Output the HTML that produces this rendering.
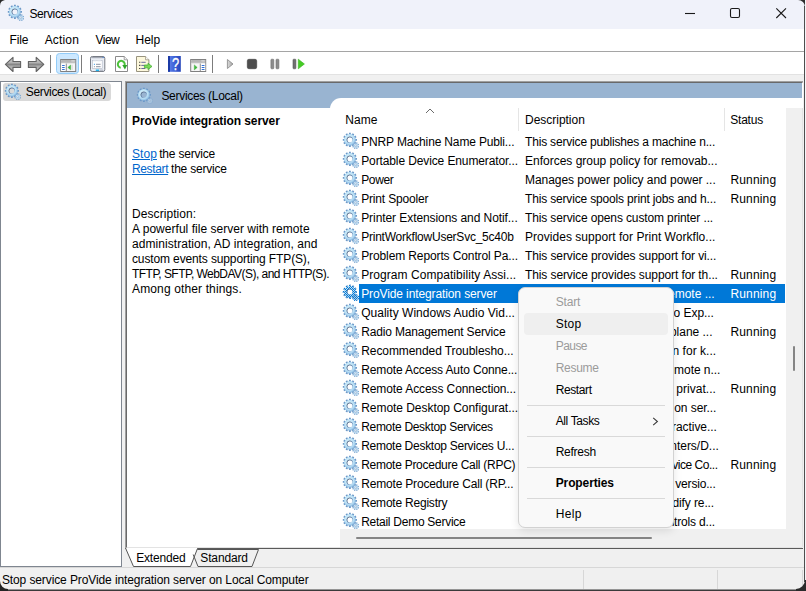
<!DOCTYPE html>
<html lang="en">
<head>
<meta charset="utf-8">
<title>Services</title>
<style>
*{box-sizing:border-box;margin:0;padding:0}
html,body{width:806px;height:591px;overflow:hidden;background:#f0f0f0}
body{font-family:"Liberation Sans",sans-serif;font-size:12px;color:#000;position:relative}
.a{position:absolute}
.t{position:absolute;white-space:nowrap;line-height:16px;height:16px}
svg{position:absolute;overflow:visible}
</style>
</head>
<body>
<svg width="0" height="0" style="left:0;top:0"><defs>
<radialGradient id="gg" cx="45%" cy="42%" r="58%"><stop offset="0" stop-color="#e2f5fc"/><stop offset="0.62" stop-color="#bfe4f7"/><stop offset="0.86" stop-color="#9bc8ea"/><stop offset="1" stop-color="#7ba6d1"/></radialGradient>
<radialGradient id="gs" cx="40%" cy="35%" r="75%"><stop offset="0" stop-color="#7fb0e8"/><stop offset="1" stop-color="#2c63c4"/></radialGradient>
<linearGradient id="ar" x1="0" y1="0" x2="0" y2="1"><stop offset="0" stop-color="#a9a9a9"/><stop offset="0.5" stop-color="#8c8c8c"/><stop offset="1" stop-color="#9d9d9d"/></linearGradient>
<linearGradient id="hb" x1="0" y1="0" x2="1" y2="0"><stop offset="0" stop-color="#6586ea"/><stop offset="0.5" stop-color="#3e62d8"/><stop offset="1" stop-color="#2546ba"/></linearGradient>
<pattern id="chk" width="2" height="2" patternUnits="userSpaceOnUse"><rect width="1" height="1" fill="#0078d7"/><rect x="1" y="1" width="1" height="1" fill="#0078d7"/></pattern>
<linearGradient id="hr" x1="0.15" y1="0.15" x2="0.85" y2="0.85"><stop offset="0" stop-color="#4a5a78"/><stop offset="0.55" stop-color="#6f8fb8"/><stop offset="1" stop-color="#b5d8f0"/></linearGradient>
<symbol id="gb" viewBox="0 0 17 17"><path d="M13.02 6.98 L14.99 6.97 L14.99 8.83 L13.02 8.82 L12.79 9.66 L14.51 10.64 L13.57 12.25 L11.87 11.26 L11.26 11.87 L12.25 13.57 L10.64 14.51 L9.66 12.79 L8.82 13.02 L8.83 14.99 L6.97 14.99 L6.98 13.02 L6.14 12.79 L5.16 14.51 L3.55 13.57 L4.54 11.87 L3.93 11.26 L2.23 12.25 L1.29 10.64 L3.01 9.66 L2.78 8.82 L0.81 8.83 L0.81 6.97 L2.78 6.98 L3.01 6.14 L1.29 5.16 L2.23 3.55 L3.93 4.54 L4.54 3.93 L3.55 2.23 L5.16 1.29 L6.14 3.01 L6.98 2.78 L6.97 0.81 L8.83 0.81 L8.82 2.78 L9.66 3.01 L10.64 1.29 L12.25 2.23 L11.26 3.93 L11.87 4.54 L13.57 3.55 L14.51 5.16 L12.79 6.14ZM5.00 7.90a2.9 2.9 0 1 0 5.8 0a2.9 2.9 0 1 0 -5.8 0Z" fill="#6c99c8" fill-rule="evenodd"/><path d="M2.00 7.90a5.9 5.9 0 1 0 11.8 0a5.9 5.9 0 1 0 -11.8 0ZM5.00 7.90a2.9 2.9 0 1 0 5.8 0a2.9 2.9 0 1 0 -5.8 0Z" fill="url(#gg)" fill-rule="evenodd"/><circle cx="7.9" cy="7.9" r="3.0" fill="none" stroke="url(#hr)" stroke-width="0.85"/><g opacity="0.45"><path d="M15.98 13.98 L17.23 14.38 L16.71 15.64 L15.54 15.05 L15.15 15.44 L15.74 16.61 L14.48 17.13 L14.08 15.88 L13.52 15.88 L13.12 17.13 L11.86 16.61 L12.45 15.44 L12.06 15.05 L10.89 15.64 L10.37 14.38 L11.62 13.98 L11.62 13.42 L10.37 13.02 L10.89 11.76 L12.06 12.35 L12.45 11.96 L11.86 10.79 L13.12 10.27 L13.52 11.52 L14.08 11.52 L14.48 10.27 L15.74 10.79 L15.15 11.96 L15.54 12.35 L16.71 11.76 L17.23 13.02 L15.98 13.42Z" fill="#7fa9d2"/><circle cx="13.8" cy="13.7" r="2.3" fill="#c0def3"/><circle cx="13.8" cy="13.7" r="0.9" fill="#fff" stroke="#7d9cc2" stroke-width="0.5"/></g></symbol>
<symbol id="g" viewBox="0 0 17 17"><path d="M13.02 6.98 L14.99 6.97 L14.99 8.83 L13.02 8.82 L12.79 9.66 L14.51 10.64 L13.57 12.25 L11.87 11.26 L11.26 11.87 L12.25 13.57 L10.64 14.51 L9.66 12.79 L8.82 13.02 L8.83 14.99 L6.97 14.99 L6.98 13.02 L6.14 12.79 L5.16 14.51 L3.55 13.57 L4.54 11.87 L3.93 11.26 L2.23 12.25 L1.29 10.64 L3.01 9.66 L2.78 8.82 L0.81 8.83 L0.81 6.97 L2.78 6.98 L3.01 6.14 L1.29 5.16 L2.23 3.55 L3.93 4.54 L4.54 3.93 L3.55 2.23 L5.16 1.29 L6.14 3.01 L6.98 2.78 L6.97 0.81 L8.83 0.81 L8.82 2.78 L9.66 3.01 L10.64 1.29 L12.25 2.23 L11.26 3.93 L11.87 4.54 L13.57 3.55 L14.51 5.16 L12.79 6.14ZM5.00 7.90a2.9 2.9 0 1 0 5.8 0a2.9 2.9 0 1 0 -5.8 0Z" fill="#6c99c8" fill-rule="evenodd"/><path d="M2.00 7.90a5.9 5.9 0 1 0 11.8 0a5.9 5.9 0 1 0 -11.8 0ZM5.00 7.90a2.9 2.9 0 1 0 5.8 0a2.9 2.9 0 1 0 -5.8 0Z" fill="url(#gg)" fill-rule="evenodd"/><circle cx="7.9" cy="7.9" r="3.0" fill="none" stroke="url(#hr)" stroke-width="0.85"/><path d="M15.98 13.98 L17.23 14.38 L16.71 15.64 L15.54 15.05 L15.15 15.44 L15.74 16.61 L14.48 17.13 L14.08 15.88 L13.52 15.88 L13.12 17.13 L11.86 16.61 L12.45 15.44 L12.06 15.05 L10.89 15.64 L10.37 14.38 L11.62 13.98 L11.62 13.42 L10.37 13.02 L10.89 11.76 L12.06 12.35 L12.45 11.96 L11.86 10.79 L13.12 10.27 L13.52 11.52 L14.08 11.52 L14.48 10.27 L15.74 10.79 L15.15 11.96 L15.54 12.35 L16.71 11.76 L17.23 13.02 L15.98 13.42Z" fill="#7fa9d2"/><circle cx="13.8" cy="13.7" r="2.3" fill="#c0def3"/><circle cx="13.8" cy="13.7" r="0.9" fill="#fff" stroke="#7d9cc2" stroke-width="0.5"/></symbol>
<symbol id="gsel" viewBox="0 0 17 17"><path d="M13.02 6.98 L14.99 6.97 L14.99 8.83 L13.02 8.82 L12.79 9.66 L14.51 10.64 L13.57 12.25 L11.87 11.26 L11.26 11.87 L12.25 13.57 L10.64 14.51 L9.66 12.79 L8.82 13.02 L8.83 14.99 L6.97 14.99 L6.98 13.02 L6.14 12.79 L5.16 14.51 L3.55 13.57 L4.54 11.87 L3.93 11.26 L2.23 12.25 L1.29 10.64 L3.01 9.66 L2.78 8.82 L0.81 8.83 L0.81 6.97 L2.78 6.98 L3.01 6.14 L1.29 5.16 L2.23 3.55 L3.93 4.54 L4.54 3.93 L3.55 2.23 L5.16 1.29 L6.14 3.01 L6.98 2.78 L6.97 0.81 L8.83 0.81 L8.82 2.78 L9.66 3.01 L10.64 1.29 L12.25 2.23 L11.26 3.93 L11.87 4.54 L13.57 3.55 L14.51 5.16 L12.79 6.14ZM5.00 7.90a2.9 2.9 0 1 0 5.8 0a2.9 2.9 0 1 0 -5.8 0Z" fill="#6c99c8" fill-rule="evenodd"/><path d="M2.00 7.90a5.9 5.9 0 1 0 11.8 0a5.9 5.9 0 1 0 -11.8 0ZM5.00 7.90a2.9 2.9 0 1 0 5.8 0a2.9 2.9 0 1 0 -5.8 0Z" fill="url(#gg)" fill-rule="evenodd"/><circle cx="7.9" cy="7.9" r="3.0" fill="none" stroke="url(#hr)" stroke-width="0.85"/><path d="M15.98 13.98 L17.23 14.38 L16.71 15.64 L15.54 15.05 L15.15 15.44 L15.74 16.61 L14.48 17.13 L14.08 15.88 L13.52 15.88 L13.12 17.13 L11.86 16.61 L12.45 15.44 L12.06 15.05 L10.89 15.64 L10.37 14.38 L11.62 13.98 L11.62 13.42 L10.37 13.02 L10.89 11.76 L12.06 12.35 L12.45 11.96 L11.86 10.79 L13.12 10.27 L13.52 11.52 L14.08 11.52 L14.48 10.27 L15.74 10.79 L15.15 11.96 L15.54 12.35 L16.71 11.76 L17.23 13.02 L15.98 13.42Z" fill="#7fa9d2"/><circle cx="13.8" cy="13.7" r="2.3" fill="#c0def3"/><circle cx="13.8" cy="13.7" r="0.9" fill="#fff" stroke="#7d9cc2" stroke-width="0.5"/><path d="M13.02 6.98 L14.99 6.97 L14.99 8.83 L13.02 8.82 L12.79 9.66 L14.51 10.64 L13.57 12.25 L11.87 11.26 L11.26 11.87 L12.25 13.57 L10.64 14.51 L9.66 12.79 L8.82 13.02 L8.83 14.99 L6.97 14.99 L6.98 13.02 L6.14 12.79 L5.16 14.51 L3.55 13.57 L4.54 11.87 L3.93 11.26 L2.23 12.25 L1.29 10.64 L3.01 9.66 L2.78 8.82 L0.81 8.83 L0.81 6.97 L2.78 6.98 L3.01 6.14 L1.29 5.16 L2.23 3.55 L3.93 4.54 L4.54 3.93 L3.55 2.23 L5.16 1.29 L6.14 3.01 L6.98 2.78 L6.97 0.81 L8.83 0.81 L8.82 2.78 L9.66 3.01 L10.64 1.29 L12.25 2.23 L11.26 3.93 L11.87 4.54 L13.57 3.55 L14.51 5.16 L12.79 6.14ZM5.30 7.90a2.6 2.6 0 1 0 5.2 0a2.6 2.6 0 1 0 -5.2 0Z" fill="url(#chk)" fill-rule="evenodd"/><path d="M15.98 13.98 L17.23 14.38 L16.71 15.64 L15.54 15.05 L15.15 15.44 L15.74 16.61 L14.48 17.13 L14.08 15.88 L13.52 15.88 L13.12 17.13 L11.86 16.61 L12.45 15.44 L12.06 15.05 L10.89 15.64 L10.37 14.38 L11.62 13.98 L11.62 13.42 L10.37 13.02 L10.89 11.76 L12.06 12.35 L12.45 11.96 L11.86 10.79 L13.12 10.27 L13.52 11.52 L14.08 11.52 L14.48 10.27 L15.74 10.79 L15.15 11.96 L15.54 12.35 L16.71 11.76 L17.23 13.02 L15.98 13.42Z" fill="url(#chk)"/></symbol>
</defs></svg>
<div class="a" style="left:0;top:0;width:806px;height:29px;background:#f0f2fa"></div>
<svg style="left:7px;top:4px" width="17" height="17"><use href="#g" width="17" height="17"/></svg>
<svg style="left:680px;top:4px" width="120" height="20" viewBox="0 0 120 20" fill="none" stroke="#1a1a1a" stroke-width="1.1"><path d="M5 9.5H15"/><rect x="50.5" y="4.5" width="9" height="9" rx="1.5"/><path d="M96.3 4.3L106 14M106 4.3L96.3 14"/></svg>
<div class="a" style="left:0;top:29px;width:806px;height:22px;background:#fff"></div>
<div class="a" style="left:0;top:51px;width:806px;height:23px;background:#fff;border-top:1px solid #a5a5a5"></div>
<div class="a" style="left:0;top:74px;width:806px;height:1px;background:#e2e2e2"></div>
<div class="a" style="left:0;top:81px;width:122px;height:486px;background:#fff;border:1px solid #7f8690"></div>
<div class="a" style="left:3px;top:83px;width:108px;height:17.5px;background:#d9d9d9;border-radius:3px"></div>
<svg style="left:4px;top:83px" width="17" height="17"><use href="#g" width="17" height="17"/></svg>
<div class="a" style="left:125px;top:81px;width:678px;height:468px;background:#fff;border-top:1px solid #a0a0a0;border-left:1px solid #a0a0a0;border-bottom:1px solid #5a5a5a"></div>
<div class="a" style="left:126px;top:82px;width:677px;height:466px;border-top:1px solid #696969;border-left:1px solid #696969;border-right:1px solid #fff;border-bottom:1px solid #e3e3e3"></div>
<div class="a" style="left:802px;top:108px;width:1px;height:439px;background:#e3e3e3"></div>
<div class="a" style="left:127px;top:83px;width:675px;height:25px;background:#99b4d1"></div>
<svg style="left:135.6px;top:86.8px" width="17" height="17"><use href="#gb" width="17" height="17"/></svg>
<div class="a" style="left:330px;top:98px;width:472px;height:449px;background:#fff;border-top-left-radius:11px"></div>
<div class="a" style="left:786px;top:108px;width:16px;height:439px;background:#f0f0f0"></div>
<div class="a" style="left:340px;top:529px;width:462px;height:18px;background:#f0f0f0"></div>
<div class="a" style="left:793px;top:346px;width:2px;height:25px;background:#858585;border-radius:1px"></div>
<div class="a" style="left:356px;top:537px;width:296px;height:2px;background:#858585;border-radius:1px"></div>
<div class="a" style="left:518px;top:108px;width:1px;height:23px;background:#e5e5e5"></div>
<div class="a" style="left:724px;top:108px;width:1px;height:23px;background:#e5e5e5"></div>
<svg style="left:424.5px;top:107.5px" width="10" height="6" viewBox="0 0 10 6" fill="none" stroke="#6a6a6a" stroke-width="1"><path d="M1 5L5 1L9 5"/></svg>
<svg style="left:342px;top:132px" width="17" height="17"><use href="#g" width="17" height="17"/></svg>
<svg style="left:342px;top:151px" width="17" height="17"><use href="#g" width="17" height="17"/></svg>
<svg style="left:342px;top:170px" width="17" height="17"><use href="#g" width="17" height="17"/></svg>
<svg style="left:342px;top:189px" width="17" height="17"><use href="#g" width="17" height="17"/></svg>
<svg style="left:342px;top:208px" width="17" height="17"><use href="#g" width="17" height="17"/></svg>
<svg style="left:342px;top:227px" width="17" height="17"><use href="#g" width="17" height="17"/></svg>
<svg style="left:342px;top:246px" width="17" height="17"><use href="#g" width="17" height="17"/></svg>
<svg style="left:342px;top:265px" width="17" height="17"><use href="#g" width="17" height="17"/></svg>
<div class="a" style="left:359px;top:284px;width:426px;height:19px;background:#0078d7"></div>
<svg style="left:342px;top:284px" width="17" height="17"><use href="#gsel" width="17" height="17"/></svg>
<svg style="left:342px;top:303px" width="17" height="17"><use href="#g" width="17" height="17"/></svg>
<svg style="left:342px;top:322px" width="17" height="17"><use href="#g" width="17" height="17"/></svg>
<svg style="left:342px;top:341px" width="17" height="17"><use href="#g" width="17" height="17"/></svg>
<svg style="left:342px;top:360px" width="17" height="17"><use href="#g" width="17" height="17"/></svg>
<svg style="left:342px;top:379px" width="17" height="17"><use href="#g" width="17" height="17"/></svg>
<svg style="left:342px;top:398px" width="17" height="17"><use href="#g" width="17" height="17"/></svg>
<svg style="left:342px;top:417px" width="17" height="17"><use href="#g" width="17" height="17"/></svg>
<svg style="left:342px;top:436px" width="17" height="17"><use href="#g" width="17" height="17"/></svg>
<svg style="left:342px;top:455px" width="17" height="17"><use href="#g" width="17" height="17"/></svg>
<svg style="left:342px;top:474px" width="17" height="17"><use href="#g" width="17" height="17"/></svg>
<svg style="left:342px;top:493px" width="17" height="17"><use href="#g" width="17" height="17"/></svg>
<svg style="left:342px;top:512px" width="17" height="17"><use href="#g" width="17" height="17"/></svg>
<svg style="left:120px;top:546px" width="150" height="22" viewBox="120 546 150 22"><path d="M125.5 548 L133.5 566.5 L190.5 566.5 L197.5 548Z" fill="#fff"/><path d="M125.5 548 L133.5 566.5 L190.5 566.5 L197.5 548.5" fill="none" stroke="#555" stroke-width="1"/><path d="M193.2 554.5 L198 566.5 L252 566.5 L258.5 549.5 L197.3 549.5" fill="none" stroke="#555" stroke-width="1"/></svg>
<div class="a" style="left:0;top:567px;width:806px;height:1px;background:#d7d7d7"></div>
<div class="a" style="left:583px;top:570px;width:1px;height:19px;background:#d7d7d7"></div>
<div class="a" style="left:717px;top:570px;width:1px;height:19px;background:#d7d7d7"></div>
<div class="a" style="left:802px;top:570px;width:1px;height:19px;background:#d7d7d7"></div>
<div class="t" style="left:29.4px;top:6px;letter-spacing:-0.371px;">Services</div>
<div class="t" style="left:9.5px;top:32px;letter-spacing:-0.134px;">File</div>
<div class="t" style="left:44.7px;top:32px;letter-spacing:0.16px;">Action</div>
<div class="t" style="left:95.5px;top:32px;letter-spacing:-0.534px;">View</div>
<div class="t" style="left:135.5px;top:32px;">Help</div>
<div class="t" style="left:25.8px;top:84px;letter-spacing:-0.347px;">Services (Local)</div>
<div class="t" style="left:161.4px;top:88px;letter-spacing:-0.294px;">Services (Local)</div>
<div class="t" style="left:132.0px;top:113px;letter-spacing:-0.08px;font-weight:bold">ProVide integration server</div>
<div class="t" style="left:132.0px;top:146px;letter-spacing:0.066px;color:#0066cc;text-decoration:underline">Stop</div>
<div class="t" style="left:159.2px;top:146px;letter-spacing:-0.2px;">the service</div>
<div class="t" style="left:132.0px;top:161px;letter-spacing:-0.366px;color:#0066cc;text-decoration:underline">Restart</div>
<div class="t" style="left:171.0px;top:161px;letter-spacing:-0.2px;">the service</div>
<div class="t" style="left:132.0px;top:206px;letter-spacing:0.074px;">Description:</div>
<div class="t" style="left:132.0px;top:221px;letter-spacing:0.025px;">A powerful file server with remote</div>
<div class="t" style="left:132.0px;top:236px;letter-spacing:0.059px;">administration, AD integration, and</div>
<div class="t" style="left:132.0px;top:251px;letter-spacing:-0.129px;">custom events supporting FTP(S),</div>
<div class="t" style="left:132.0px;top:266px;letter-spacing:-0.535px;">TFTP, SFTP, WebDAV(S), and HTTP(S).</div>
<div class="t" style="left:132.0px;top:281px;letter-spacing:0.134px;">Among other things.</div>
<div class="t" style="left:345.3px;top:112px;letter-spacing:0.067px;">Name</div>
<div class="t" style="left:525.0px;top:112px;letter-spacing:-0.02px;">Description</div>
<div class="t" style="left:730.2px;top:112px;letter-spacing:-0.2px;">Status</div>
<div class="t" style="left:136.2px;top:550px;letter-spacing:-0.17px;">Extended</div>
<div class="t" style="left:200.3px;top:550px;letter-spacing:-0.143px;">Standard</div>
<div class="t" style="left:1.9px;top:572px;letter-spacing:-0.104px;">Stop service ProVide integration server on Local Computer</div>
<div class="t" style="left:361.2px;top:134px;letter-spacing:-0.152px;">PNRP Machine Name Publi...</div>
<div class="t" style="left:525.0px;top:134px;letter-spacing:-0.178px;">This service publishes a machine n...</div>
<div class="t" style="left:361.2px;top:153px;letter-spacing:-0.115px;">Portable Device Enumerator...</div>
<div class="t" style="left:525.0px;top:153px;letter-spacing:-0.007px;">Enforces group policy for removab...</div>
<div class="t" style="left:361.2px;top:172px;letter-spacing:-0.35px;">Power</div>
<div class="t" style="left:525.0px;top:172px;letter-spacing:-0.042px;">Manages power policy and power ...</div>
<div class="t" style="left:730.4px;top:172px;letter-spacing:0.167px;">Running</div>
<div class="t" style="left:361.2px;top:191px;letter-spacing:-0.166px;">Print Spooler</div>
<div class="t" style="left:525.0px;top:191px;letter-spacing:-0.163px;">This service spools print jobs and h...</div>
<div class="t" style="left:730.4px;top:191px;letter-spacing:0.167px;">Running</div>
<div class="t" style="left:361.2px;top:210px;letter-spacing:-0.074px;">Printer Extensions and Notif...</div>
<div class="t" style="left:525.0px;top:210px;letter-spacing:-0.127px;">This service opens custom printer ...</div>
<div class="t" style="left:361.2px;top:229px;letter-spacing:-0.232px;">PrintWorkflowUserSvc_5c40b</div>
<div class="t" style="left:525.0px;top:229px;letter-spacing:0.033px;">Provides support for Print Workflo...</div>
<div class="t" style="left:361.2px;top:248px;letter-spacing:-0.115px;">Problem Reports Control Pa...</div>
<div class="t" style="left:525.0px;top:248px;letter-spacing:-0.105px;">This service provides support for vi...</div>
<div class="t" style="left:361.2px;top:267px;letter-spacing:0.056px;">Program Compatibility Assi...</div>
<div class="t" style="left:525.0px;top:267px;letter-spacing:-0.1px;">This service provides support for th...</div>
<div class="t" style="left:730.4px;top:267px;letter-spacing:0.167px;">Running</div>
<div class="t" style="left:361.2px;top:286px;letter-spacing:-0.112px;color:#fff">ProVide integration server</div>
<div class="t" style="left:525.0px;top:286px;letter-spacing:-0.012px;color:#fff">A powerful file server with remote ...</div>
<div class="t" style="left:730.4px;top:286px;letter-spacing:0.167px;color:#fff">Running</div>
<div class="t" style="left:361.2px;top:305px;letter-spacing:0.021px;">Quality Windows Audio Vid...</div>
<div class="t" style="left:525.0px;top:305px;letter-spacing:-0.049px;">Quality Windows Audio Video Exp...</div>
<div class="t" style="left:361.2px;top:324px;letter-spacing:-0.158px;">Radio Management Service</div>
<div class="t" style="left:525.0px;top:324px;letter-spacing:-0.019px;">Radio Management and Airplane ...</div>
<div class="t" style="left:730.4px;top:324px;letter-spacing:0.167px;">Running</div>
<div class="t" style="left:361.2px;top:343px;letter-spacing:-0.074px;">Recommended Troublesho...</div>
<div class="t" style="left:525.0px;top:343px;letter-spacing:0.028px;">Enables automatic mitigation for k...</div>
<div class="t" style="left:361.2px;top:362px;letter-spacing:-0.124px;">Remote Access Auto Conne...</div>
<div class="t" style="left:525.0px;top:362px;letter-spacing:-0.06px;">Creates a connection to a remote n...</div>
<div class="t" style="left:361.2px;top:381px;letter-spacing:-0.093px;">Remote Access Connection...</div>
<div class="t" style="left:525.0px;top:381px;letter-spacing:0.022px;">Manages dial-up and virtual privat...</div>
<div class="t" style="left:730.4px;top:381px;letter-spacing:0.167px;">Running</div>
<div class="t" style="left:361.2px;top:400px;letter-spacing:-0.044px;">Remote Desktop Configurat...</div>
<div class="t" style="left:525.0px;top:400px;letter-spacing:-0.059px;">Remote Desktop Configuration ser...</div>
<div class="t" style="left:361.2px;top:419px;letter-spacing:-0.309px;">Remote Desktop Services</div>
<div class="t" style="left:525.0px;top:419px;letter-spacing:-0.061px;">Allows users to connect interactive...</div>
<div class="t" style="left:361.2px;top:438px;letter-spacing:-0.275px;">Remote Desktop Services U...</div>
<div class="t" style="left:525.0px;top:438px;letter-spacing:-0.006px;">Allows the redirection of Printers/D...</div>
<div class="t" style="left:361.2px;top:457px;letter-spacing:-0.269px;">Remote Procedure Call (RPC)</div>
<div class="t" style="left:525.0px;top:457px;letter-spacing:-0.48px;">The RPCSS service is the Service Co...</div>
<div class="t" style="left:730.4px;top:457px;letter-spacing:0.167px;">Running</div>
<div class="t" style="left:361.2px;top:476px;letter-spacing:-0.178px;">Remote Procedure Call (RP...</div>
<div class="t" style="left:525.0px;top:476px;letter-spacing:-0.183px;">In Windows 2003 and earlier versio...</div>
<div class="t" style="left:361.2px;top:495px;letter-spacing:-0.214px;">Remote Registry</div>
<div class="t" style="left:525.0px;top:495px;letter-spacing:-0.102px;">Enables remote users to modify re...</div>
<div class="t" style="left:361.2px;top:514px;letter-spacing:-0.266px;">Retail Demo Service</div>
<div class="t" style="left:525.0px;top:514px;letter-spacing:-0.183px;">The Retail Demo service controls d...</div>
<div class="a" style="left:518px;top:287px;width:156px;height:241px;background:#f9f9f9;border:1px solid #d2d2d2;border-radius:7px;box-shadow:0 3px 8px rgba(0,0,0,.10)"></div>
<div class="a" style="left:524px;top:313px;width:144px;height:22px;background:#efefef;border-radius:4px"></div>
<div class="a" style="left:527px;top:405px;width:138px;height:1px;background:#d9d9d9"></div>
<div class="a" style="left:527px;top:436px;width:138px;height:1px;background:#d9d9d9"></div>
<div class="a" style="left:527px;top:467px;width:138px;height:1px;background:#d9d9d9"></div>
<div class="a" style="left:527px;top:498px;width:138px;height:1px;background:#d9d9d9"></div>
<svg style="left:651px;top:416px" width="9" height="11" viewBox="0 0 9 11" fill="none" stroke="#3a3a3a" stroke-width="1.1"><path d="M2.2 1.8L6.4 5.5L2.2 9.2"/></svg>
<div class="a" style="left:805px;top:0;width:1px;height:591px;background:#f4f4f8"></div>
<svg style="left:0;top:0" width="806" height="591" viewBox="0 0 806 591"><path d="M804.5 6V582" stroke="#4e4e4e" stroke-width="1" fill="none"/><path d="M8 590.25H797" stroke="#3a3a3a" stroke-width="1.5" fill="none"/><path d="M0 0H5A6 6 0 0 0 0 6Z" fill="#2a2a2a"/><path d="M806 0H798A7 7 0 0 1 805 7V0Z" fill="#2e2e2e"/><path d="M0 591V581A8 8 0 0 0 8 589V591Z" fill="#242424"/><path d="M806 591V580H805A9 9 0 0 1 796 589V591Z" fill="#2a2a2a"/></svg>
<svg style="left:0;top:51px" width="320" height="25" viewBox="0 51 320 25"><defs><linearGradient id="as" x1="0" y1="0" x2="0" y2="1"><stop offset="0" stop-color="#c6c6c6"/><stop offset="0.36" stop-color="#b4b4b4"/><stop offset="0.5" stop-color="#868686"/><stop offset="0.64" stop-color="#adadad"/><stop offset="1" stop-color="#c0c0c0"/></linearGradient><linearGradient id="pl" x1="0" y1="0" x2="1" y2="0"><stop offset="0" stop-color="#dcdcdc"/><stop offset="1" stop-color="#a2a2a2"/></linearGradient></defs><path d="M5.4 64.4L13 57.4V61.5H20.6V67.4H13V71.5Z" fill="url(#as)" stroke="#626262" stroke-width="1.1" stroke-linejoin="round"/><path d="M43.8 64.4L36.2 57.4V61.5H28.4V67.4H36.2V71.5Z" fill="url(#as)" stroke="#626262" stroke-width="1.1" stroke-linejoin="round"/><path d="M50.5 55V73" stroke="#7c7c7c" stroke-width="1"/><path d="M81.5 55V73" stroke="#7c7c7c" stroke-width="1"/><path d="M158.5 55V73" stroke="#7c7c7c" stroke-width="1"/><path d="M212.5 55V73" stroke="#7c7c7c" stroke-width="1"/><rect x="56.5" y="53.5" width="22" height="20" rx="3" fill="#cce8ff" stroke="#93ccf8"/><rect x="60.7" y="59.5" width="15" height="12" fill="#f6f6f6" stroke="#808080"/><rect x="61.2" y="60" width="14" height="1.5" fill="#b6b6b6"/><rect x="61.2" y="61.5" width="14" height="1.2" fill="#989898"/><rect x="61.2" y="62.7" width="14" height="0.9" fill="#dcdcdc"/><path d="M71.60000000000001 60.9h1M73.4 60.9h1" stroke="#fff" stroke-width="1"/><rect x="61.2" y="63.6" width="4.6" height="7.4" fill="#fff"/><path d="M66.3 63.6V71" stroke="#8f8f8f" stroke-width="1"/><path d="M62.1 65.5h2.6M62.1 67.5h2.6M62.1 69.5h2.6" stroke="#2f6fd6" stroke-width="1"/><path d="M70.60000000000001 65L67.8 67.4L70.60000000000001 69.8Z" fill="#3db83b" stroke="#35a533" stroke-width="0.4"/><path d="M72.10000000000001 64.8V70" stroke="#d0d0d0" stroke-width="0.9"/><rect x="90.5" y="56.5" width="14.3" height="15" rx="1.8" fill="#e9edf4" stroke="#777b84"/><path d="M91.5 57.6h12.3" stroke="#a4a9b4" stroke-width="1.2"/><path d="M102.6 57.4h1.1" stroke="#3a7be0" stroke-width="1"/><rect x="92.6" y="60.4" width="9.6" height="8" fill="#fff" stroke="#b2b8c6" stroke-width="0.6"/><path d="M93.2 61h3.2M97.4 61h3.4" stroke="#e9edf4" stroke-width="1.2"/><path d="M96 64.3h4.6M96 66.7h4.6" stroke="#8c93a3" stroke-width="1"/><path d="M93.9 64.3h1" stroke="#1c8fe8" stroke-width="1"/><path d="M93.9 66.7h1" stroke="#8c93a3" stroke-width="1"/><rect x="95.8" y="69.5" width="3.3" height="1.6" fill="#20b4ee"/><rect x="99.6" y="69.5" width="3.4" height="1.6" fill="#b9bec9"/><path d="M115.5 56.5H124.2L127.5 59.8V71.5H115.5Z" fill="#fff" stroke="#8a8a8a"/><path d="M124.2 56.5V59.8H127.5" fill="#f2f2f2" stroke="#8a8a8a" stroke-width="0.8"/><path d="M120.7 67.7A3.45 3.45 0 1 1 124.6 65.2" fill="none" stroke="#4cc23a" stroke-width="2"/><path d="M122.3 65L127.3 65L124.9 69.4Z" fill="#2fa52a"/><path d="M136.5 56.5H145.6L148.9 59.8V71.5H136.5Z" fill="#fdf8dc" stroke="#98937f"/><path d="M145.6 56.5V59.8H148.9" fill="#fff" stroke="#98937f" stroke-width="0.8"/><path d="M139.2 62.3h1.1M139.2 65.4h1.1M139.2 68.5h1.1" stroke="#222" stroke-width="1.1"/><path d="M141.3 62.3h4.4M141.3 65.4h3.2M141.3 68.5h4" stroke="#6a6c9c" stroke-width="1"/><path d="M144.4 65H148V63.2L152 66.4L148 69.6V67.8H144.4Z" fill="#7bd957" stroke="#3aaa2c" stroke-width="0.7" stroke-linejoin="round"/><rect x="168" y="56" width="12.8" height="15.8" fill="url(#hb)"/><rect x="168" y="56" width="2" height="15.8" fill="#1b3aa6"/><text transform="translate(175.5 69.7) scale(0.76 1)" x="0" y="0" text-anchor="middle" font-family="Liberation Sans, sans-serif" font-size="17" fill="#fff" stroke="#fff" stroke-width="0.35">?</text><rect x="190.7" y="59.5" width="15" height="12" fill="#f6f6f6" stroke="#808080"/><rect x="191.2" y="60" width="14" height="1.5" fill="#b6b6b6"/><rect x="191.2" y="61.5" width="14" height="1.2" fill="#989898"/><rect x="191.2" y="62.7" width="14" height="0.9" fill="#dcdcdc"/><path d="M201.6 60.9h1M203.39999999999998 60.9h1" stroke="#fff" stroke-width="1"/><rect x="200.79999999999998" y="63.6" width="4.4" height="7.4" fill="#fff"/><path d="M200.29999999999998 63.6V71" stroke="#8f8f8f" stroke-width="1"/><path d="M201.7 65.5h2.8M201.7 67.5h2.8M201.7 69.5h2.8" stroke="#2f6fd6" stroke-width="1"/><path d="M194.29999999999998 64.9L197.2 67.4L194.29999999999998 69.9Z" fill="#3db83b" stroke="#35a533" stroke-width="0.4"/><path d="M227.4 59.5L233 64L227.4 68.5Z" fill="url(#pl)" stroke="#8e8e8e" stroke-width="0.9" stroke-linejoin="round"/><rect x="247.3" y="59.3" width="9.4" height="9.4" rx="1.6" fill="#4d4d4d" stroke="#3c3c3c" stroke-width="0.6"/><rect x="270.9" y="59.2" width="2.9" height="9.6" rx="0.8" fill="#8c8c8c" stroke="#6c6c6c" stroke-width="0.6"/><rect x="276" y="59.2" width="2.9" height="9.6" rx="0.8" fill="#8c8c8c" stroke="#6c6c6c" stroke-width="0.6"/><rect x="293" y="59.2" width="2.9" height="9.6" rx="0.8" fill="#707070" stroke="#565656" stroke-width="0.6"/><path d="M298.3 59.2L304.4 64L298.3 68.8Z" fill="#45cc24" stroke="#36b01b" stroke-width="0.6" stroke-linejoin="round"/></svg>
<div class="t" style="left:555.7px;top:294px;letter-spacing:-0.15px;color:#9b9b9b">Start</div>
<div class="t" style="left:555.7px;top:316px;letter-spacing:0.266px;">Stop</div>
<div class="t" style="left:555.7px;top:338px;letter-spacing:-0.55px;color:#9b9b9b">Pause</div>
<div class="t" style="left:555.7px;top:360px;letter-spacing:-0.28px;color:#9b9b9b">Resume</div>
<div class="t" style="left:555.7px;top:382px;letter-spacing:-0.399px;">Restart</div>
<div class="t" style="left:555.7px;top:413px;letter-spacing:-0.376px;">All Tasks</div>
<div class="t" style="left:555.7px;top:444px;letter-spacing:-0.267px;">Refresh</div>
<div class="t" style="left:555.7px;top:475px;letter-spacing:-0.112px;font-weight:bold">Properties</div>
<div class="t" style="left:555.7px;top:506px;letter-spacing:0.333px;">Help</div>
</body>
</html>
